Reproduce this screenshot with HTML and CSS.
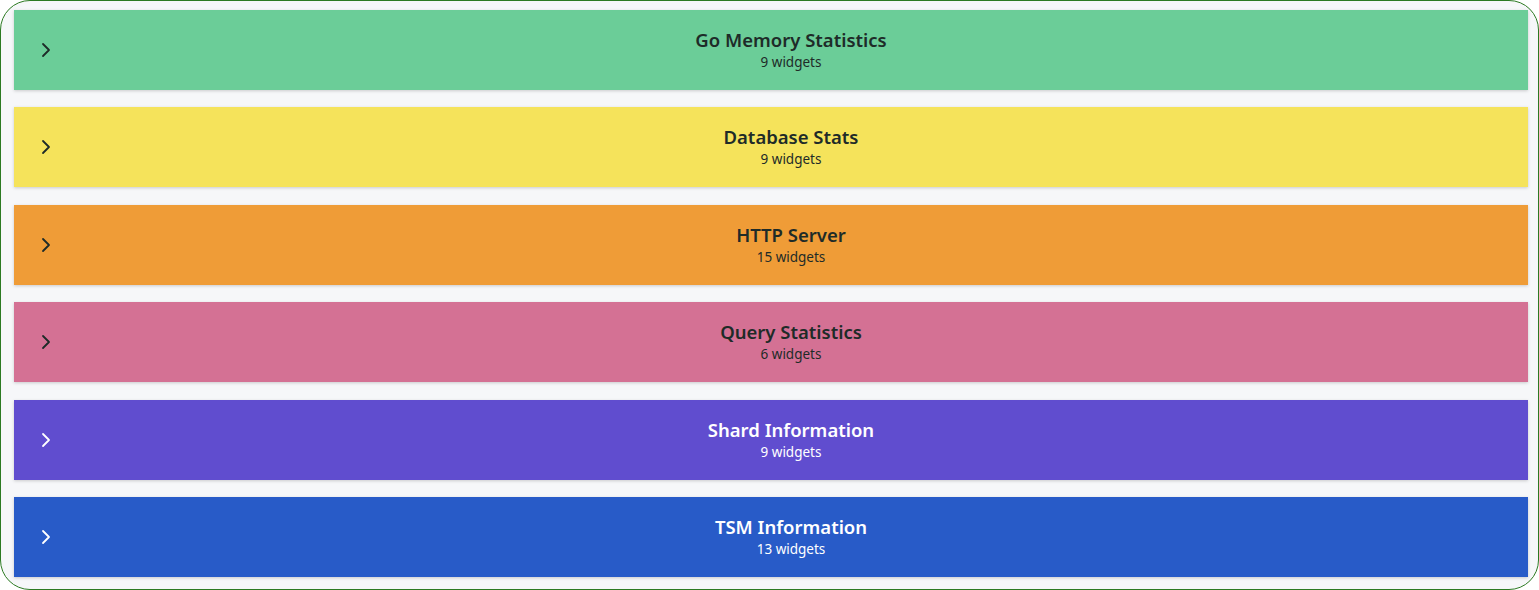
FILE: index.html
```html
<!doctype html>
<html>
<head>
    <meta charset="utf-8">
    <title>Dashboard sections</title>
    <link rel="stylesheet" href="styles.css">
</head>
<body>
<div class="board">
    <div class="section section-green">
        <svg class="chevron" viewBox="0 0 12 16"><path d="M3 2l6 6-6 6"/></svg>
        <div class="section-text">
            <p class="section-title">Go Memory Statistics</p>
            <p class="section-count">9 widgets</p>
        </div>
    </div>
    <div class="section section-yellow">
        <svg class="chevron" viewBox="0 0 12 16"><path d="M3 2l6 6-6 6"/></svg>
        <div class="section-text">
            <p class="section-title">Database Stats</p>
            <p class="section-count">9 widgets</p>
        </div>
    </div>
    <div class="section section-orange">
        <svg class="chevron" viewBox="0 0 12 16"><path d="M3 2l6 6-6 6"/></svg>
        <div class="section-text">
            <p class="section-title">HTTP Server</p>
            <p class="section-count">15 widgets</p>
        </div>
    </div>
    <div class="section section-pink">
        <svg class="chevron" viewBox="0 0 12 16"><path d="M3 2l6 6-6 6"/></svg>
        <div class="section-text">
            <p class="section-title">Query Statistics</p>
            <p class="section-count">6 widgets</p>
        </div>
    </div>
    <div class="section section-purple light">
        <svg class="chevron" viewBox="0 0 12 16"><path d="M3 2l6 6-6 6"/></svg>
        <div class="section-text">
            <p class="section-title">Shard Information</p>
            <p class="section-count">9 widgets</p>
        </div>
    </div>
    <div class="section section-blue light">
        <svg class="chevron" viewBox="0 0 12 16"><path d="M3 2l6 6-6 6"/></svg>
        <div class="section-text">
            <p class="section-title">TSM Information</p>
            <p class="section-count">13 widgets</p>
        </div>
    </div>
</div>
</body>
</html>
```

FILE: styles.css
```css
html, body {
    margin: 0;
    height: 100%;
    background: #ffffff;
}

body {
    font-family: "Noto Sans", "Open Sans", sans-serif;
    -webkit-font-smoothing: antialiased;
}

.board {
    box-sizing: border-box;
    height: 590px;
    padding: 9px 10px 12px 13px;
    border: 1.5px solid #2c7a22;
    border-radius: 30px;
    background: #f6f7f9;
    display: flex;
    flex-direction: column;
    gap: 17.5px;
}

.section {
    position: relative;
    height: 80px;
    padding-left: 40px;
    display: flex;
    align-items: center;
    justify-content: center;
    color: #1e2b28;
    box-shadow: 0 1px 3px rgba(0, 0, 0, 0.18);
}

.section.light {
    color: #ffffff;
}

.chevron {
    position: absolute;
    left: 26px;
    top: 32px;
    width: 12px;
    height: 16px;
    fill: none;
    stroke: currentColor;
    stroke-width: 1.8;
    stroke-linecap: round;
    stroke-linejoin: round;
}

.section-text {
    text-align: center;
}

.section-text p {
    margin: 0;
}

.section-title {
    font-size: 18.5px;
    font-weight: 600;
    line-height: 24px;
}

.section-count {
    margin-top: 2px;
    font-size: 13.5px;
    line-height: 20px;
}

.section-green { background: #6bcd98; }
.section-yellow { background: #f5e35b; }
.section-orange { background: #ef9c37; }
.section-pink { background: #d47194; }
.section-purple { background: #604dcf; }
.section-blue { background: #285bc8; }
```
